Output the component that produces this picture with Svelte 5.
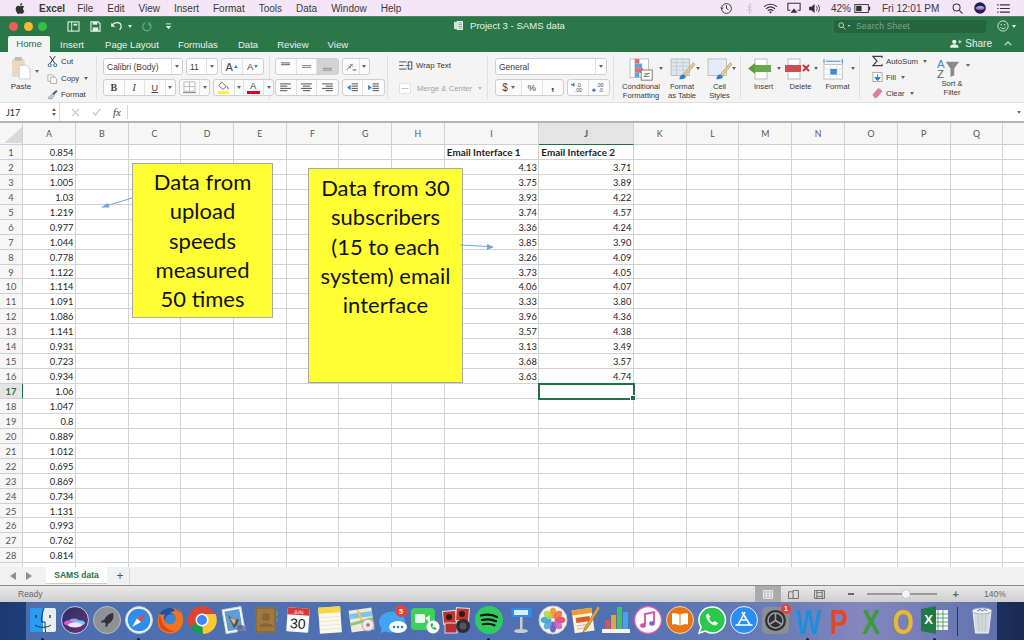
<script>
  const menus = ['File', 'Edit', 'View', 'Insert', 'Format', 'Tools', 'Data', 'Window', 'Help'];
  const tabs = [['Insert', 10], ['Page Layout', 21], ['Formulas', 19], ['Data', 20], ['Review', 19], ['View', 19]];
  const colA = ['0.854','1.023','1.005','1.03','1.219','0.977','1.044','0.778','1.122','1.114','1.091','1.086','1.141','0.931','0.723','0.934','1.06','1.047','0.8','0.889','1.012','0.695','0.869','0.734','1.131','0.993','0.762','0.814'];
  const colI = ['Email Interface 1','4.13','3.75','3.93','3.74','3.36','3.85','3.26','3.73','4.06','3.33','3.96','3.57','3.13','3.68','3.63'];
  const colJ = ['Email Interface 2','3.71','3.89','4.22','4.57','4.24','3.90','4.09','4.05','4.07','3.80','4.36','4.38','3.49','3.57','4.74'];
  const letters = 'ABCDEFGHIJKLMNOPQ'.split('').concat('');
  const rows = Array.from({ length: 29 }, (_, i) => i + 1);

  function cellText(col, row) {
    if (col === 'A') return colA[row - 1] ?? '';
    if (col === 'I') return colI[row - 1] ?? '';
    if (col === 'J') return colJ[row - 1] ?? '';
    return '';
  }
</script>

<div class="screen">
  <!-- mac menu bar -->
  <div class="menubar">
    <svg class="apple" viewBox="0 0 14 16" width="11" height="13"><path d="M10.2 8.4c0-1.7 1.4-2.5 1.5-2.6-.8-1.200-2.100-1.400-2.500-1.400-1.100-.1-2.100.6-2.600.6-.6 0-1.400-.6-2.300-.6C3.100 4.400 2 5.100 1.400 6.200.2 8.300 1.100 11.500 2.300 13.200c.6.8 1.200 1.800 2.100 1.700.8 0 1.200-.5 2.200-.5s1.300.5 2.200.5 1.500-.8 2.100-1.700c.7-1 .9-1.900 1-2-.1 0-1.700-.7-1.700-2.800zM8.500 3.300c.5-.6.800-1.400.7-2.300-.7 0-1.600.5-2.100 1.100-.5.5-.9 1.400-.8 2.200.8.1 1.700-.4 2.200-1z" fill="#333"/></svg>
    <b>Excel</b>
    {#each menus as m}<span>{m}</span>{/each}
    <div class="status-items">
      <svg class="i-tm" viewBox="0 0 14 14" width="13" height="13"><circle cx="7" cy="7" r="5.300" fill="none" stroke="#333"/><path d="M7 3.500V7l2.300 1.400M.5 6l1.500 1.600L3.400 6" fill="none" stroke="#333"/></svg>
      <svg class="i-bt" viewBox="0 0 10 14" width="9" height="13"><path d="M2 4l6 6-3 3V1l3 3-6 6" fill="none" stroke="#c9c3cc"/></svg>
      <svg class="i-wifi" viewBox="0 0 16 12" width="15" height="11"><path d="M1 4c4-3.500 10-3.500 14 0M3 6.300c3-2.500 7-2.500 10 0M5 8.500c1.800-1.500 4.200-1.500 6 0" fill="none" stroke="#333" stroke-width="1.100"/><path d="M8 11.500L6.500 9.800c1-.6 2-.6 3 0z" fill="#333"/></svg>
      <svg class="i-air" viewBox="0 0 16 13" width="14" height="12"><path d="M4 9H1V1h14v8h-3" fill="none" stroke="#333" stroke-width="1.200"/><path d="M8 7l4 5H4z" fill="#333"/></svg>
      <svg class="i-vol" viewBox="0 0 14 12" width="13" height="11"><path d="M0 4h2.500L6 1v10L2.500 8H0z" fill="#333"/><path d="M8 3.500c1 1.500 1 3.500 0 5M10 2c1.700 2.400 1.700 5.600 0 8" fill="none" stroke="#333"/></svg>
      <span class="pct">42%</span>
      <svg class="i-bat" viewBox="0 0 18 10" width="17" height="9"><rect x=".5" y=".5" width="15" height="9" fill="none" stroke="#333"/><rect x="2" y="2" width="6" height="6" fill="#333"/><rect x="16" y="3" width="1.500" height="4" fill="#333"/></svg>
      <span class="clock">Fri 12:01 PM</span>
      <svg class="i-srch" viewBox="0 0 12 12" width="11" height="11"><circle cx="5" cy="5" r="3.800" fill="none" stroke="#333" stroke-width="1.100"/><path d="M8 8l3.500 3.500" stroke="#333" stroke-width="1.200"/></svg>
      <svg class="i-siri" viewBox="0 0 12 12" width="12" height="12"><circle cx="6" cy="6" r="5.800" fill="#20204a"/><ellipse cx="6" cy="6" rx="4.500" ry="1.800" fill="#c46ad8"/><ellipse cx="6.500" cy="5" rx="3" ry="1" fill="#68c8f0"/></svg>
      <svg class="i-list" viewBox="0 0 14 10" width="13" height="9"><path d="M3 1h11M3 5h11M3 9h11" stroke="#333" stroke-width="1.200"/><path d="M0 1h1.500M0 5h1.500M0 9h1.500" stroke="#333" stroke-width="1.200"/></svg>
    </div>
  </div>

  <!-- window title row -->
  <div class="titlebar">
    <div class="lights"><i class="r"></i><i class="y"></i><i class="g"></i></div>
    <div class="qat">
      <svg viewBox="0 0 14 12" width="13" height="11"><rect x="1" y="1" width="12" height="10" fill="none" stroke="#e8f1eb" stroke-width="1.200"/><path d="M5 1v10" stroke="#e8f1eb"/><rect x="7" y="3" width="4" height="2" fill="#e8f1eb"/></svg>
      <svg viewBox="0 0 12 12" width="11" height="11"><path d="M1 1h8l2 2v8H1z" fill="none" stroke="#e8f1eb" stroke-width="1.200"/><rect x="3" y="1" width="5" height="3" fill="#e8f1eb"/><rect x="3" y="7" width="6" height="4" fill="#e8f1eb"/></svg>
      <svg viewBox="0 0 14 12" width="12" height="10"><path d="M1 6c1-3 3-4 6-4 3 0 5 2 5 4.500 0 2-1 3-2 4" fill="none" stroke="#e8f1eb" stroke-width="1.500"/><path d="M0 2v5h5z" fill="#e8f1eb"/></svg>
      <i class="caret lt"></i>
      <svg class="dim" viewBox="0 0 12 12" width="11" height="11"><path d="M8 2.500A4.500 4.500 0 1 1 3.500 2" fill="none" stroke="#6fa384" stroke-width="1.400"/><path d="M7 0v5h3z" fill="#6fa384"/></svg>
      <svg class="cust" viewBox="0 0 8 7" width="7" height="7"><path d="M1 .5h6" stroke="#e8f1eb"/><path d="M1 3h6L4 6.500z" fill="#e8f1eb"/></svg>
    </div>
    <div class="doc">
      <svg viewBox="0 0 10 12" width="9" height="11"><rect x="3" y="1" width="7" height="10" fill="#e8f1eb"/><path d="M5 3h4M5 5h4M5 7h4M5 9h4" stroke="#2b7748" stroke-width=".6"/><rect x="0" y="2" width="5" height="8" fill="#cfe3d6"/></svg>
      Project 3 - SAMS data
    </div>
    <div class="search">
      <svg viewBox="0 0 10 10" width="8" height="8"><circle cx="4" cy="4" r="3" fill="none" stroke="#dfeae3"/><path d="M6.300 6.300l3 3" stroke="#dfeae3"/></svg>
      <i class="caret lt tiny"></i>
      <span>Search Sheet</span>
    </div>
    <svg class="smiley" viewBox="0 0 14 14" width="12" height="12"><circle cx="7" cy="7" r="6" fill="none" stroke="#e8f1eb"/><circle cx="5" cy="5.500" r=".8" fill="#e8f1eb"/><circle cx="9" cy="5.500" r=".8" fill="#e8f1eb"/><path d="M4 8.500c1.500 2 4.500 2 6 0" fill="none" stroke="#e8f1eb"/></svg>
    <i class="caret lt smcaret"></i>
  </div>

  <div class="tabs">
    <div class="tab active">Home</div>
    {#each tabs as t}<div class="tab" style="margin-left:{t[1]}px">{t[0]}</div>{/each}
    <div class="share">
      <svg viewBox="0 0 14 10" width="12" height="9"><circle cx="5" cy="3" r="2.500" fill="#e8f1eb"/><path d="M0 10c0-3 2-4 5-4s5 1 5 4z" fill="#e8f1eb"/><path d="M11.500 1v4M9.500 3h4" stroke="#e8f1eb"/></svg>
      Share
      <svg class="chev" viewBox="0 0 10 6" width="8" height="5"><path d="M1 5l4-4 4 4" fill="none" stroke="#e8f1eb" stroke-width="1.300"/></svg>
    </div>
  </div>

  <!-- ribbon -->
  <div class="ribbon">
    <div class="grp clip">
      <div class="paste">
        <svg viewBox="0 0 22 26" width="20" height="24"><rect x="1" y="3" width="14" height="20" rx="1" fill="#ead9bf"/><rect x="4" y="1" width="8" height="4" rx="1" fill="#bdbdbd"/><path d="M9 10h8l4 4v11H9z" fill="#fff" stroke="#c9c9c9"/></svg>
        <span>Paste</span>
      </div>
      <i class="caret pcaret"></i>
      <div class="cliplist">
        <div><svg viewBox="0 0 12 12" width="11" height="11"><path d="M3 0l5.500 8M9 0L3.500 8" stroke="#222" stroke-width="1"/><circle cx="3" cy="10" r="1.700" fill="none" stroke="#1d5fa8"/><circle cx="9" cy="10" r="1.700" fill="none" stroke="#1d5fa8"/></svg>Cut</div>
        <div><svg viewBox="0 0 12 12" width="11" height="11"><path d="M1 2h5l1 1v6H1z" fill="#fff" stroke="#aaa"/><path d="M4 4.500h4.500l2 2v5H4z" fill="#fff" stroke="#aaa"/></svg>Copy<i class="caret"></i></div>
        <div><svg viewBox="0 0 12 12" width="11" height="11"><path d="M1 10l5-5 2 2-3 4z" fill="#b8cfe6" stroke="#6a7f96" stroke-width=".6"/><path d="M6 5l4-4 1.500 1.500-4 4z" fill="#555"/></svg>Format</div>
      </div>
    </div>

    <div class="grp font">
      <div class="r">
        <div class="box fname"><span>Calibri (Body)</span><em><i class="caret"></i></em></div>
        <div class="box fsize"><span>11</span><em><i class="caret"></i></em></div>
        <div class="btns"><button class="w21 big">A<small class="up"></small></button><button class="w21 mid">A<small class="down"></small></button></div>
      </div>
      <div class="r">
        <div class="btns"><button class="w21 ser"><b>B</b></button><button class="w21 ser"><i>I</i></button><button class="w21 ser under">U</button><button class="w9"><i class="caret"></i></button></div>
        <div class="btns">
          <button class="w21"><svg viewBox="0 0 14 14" width="13" height="13"><path d="M1 1h12v10H1zM7 1v10M1 6h12" fill="none" stroke="#bbb"/><path d="M0 12.500h14" stroke="#888" stroke-width="1.200"/></svg></button>
          <button class="w9"><i class="caret"></i></button>
        </div>
        <div class="btns">
          <button class="w21"><svg viewBox="0 0 14 14" width="13" height="13"><path d="M5 1l5 5-3.500 3L2 5z" fill="#fff" stroke="#666"/><path d="M11 6s1.500 2 1 3" stroke="#2f7fd0"/><rect x="1" y="11" width="12" height="3" fill="#ffee33"/></svg></button>
          <button class="w9"><i class="caret"></i></button>
          <button class="w21 colr">A<span></span></button>
          <button class="w9"><i class="caret"></i></button>
        </div>
      </div>
    </div>

    <div class="grp align">
      <div class="r">
        <div class="btns">
          <button class="w21"><svg viewBox="0 0 12 10" width="11" height="9"><path d="M1 1h10M1 3h10" stroke="#555"/></svg></button>
          <button class="w21"><svg viewBox="0 0 12 10" width="11" height="9"><path d="M1 4h10M1 6h10" stroke="#777"/></svg></button>
          <button class="w21 on"><svg viewBox="0 0 12 10" width="11" height="9"><path d="M1 7h10M1 9h10" stroke="#888"/></svg></button>
        </div>
        <div class="btns"><button class="w17"><svg viewBox="0 0 14 12" width="12" height="11"><path d="M2 10l7-7M4 5l3 3M6 3l3 3" stroke="#555" fill="none"/><path d="M9 10h4" stroke="#2f7fd0" stroke-width="1.400"/></svg></button><button class="w9"><i class="caret"></i></button></div>
      </div>
      <div class="r">
        <div class="btns">
          <button class="w21"><svg viewBox="0 0 12 10" width="11" height="9"><path d="M0 1h12M0 3.500h8M0 6h12M0 8.500h8" stroke="#444"/></svg></button>
          <button class="w21"><svg viewBox="0 0 12 10" width="11" height="9"><path d="M0 1h12M2 3.500h8M0 6h12M2 8.500h8" stroke="#444"/></svg></button>
          <button class="w21"><svg viewBox="0 0 12 10" width="11" height="9"><path d="M0 1h12M4 3.500h8M0 6h12M4 8.500h8" stroke="#444"/></svg></button>
        </div>
        <div class="btns">
          <button class="w21"><svg viewBox="0 0 12 10" width="11" height="9"><path d="M5 1h7M5 3.500h7M5 6h7M5 8.500h7" stroke="#444"/><path d="M0 5l4-3v6z" fill="#2f7fd0"/></svg></button>
          <button class="w21"><svg viewBox="0 0 12 10" width="11" height="9"><path d="M5 1h7M5 3.500h7M5 6h7M5 8.500h7" stroke="#444"/><path d="M4 5L0 2v6z" fill="#2f7fd0"/></svg></button>
        </div>
      </div>
    </div>

    <div class="grp wrap">
      <div class="wl"><svg viewBox="0 0 16 10" width="15" height="9"><path d="M1 1h8M1 5h5M1 9h8" stroke="#444"/><rect x="11" y="1" width="4" height="8" fill="none" stroke="#444"/><path d="M8 5h5" stroke="#2f7fd0"/></svg>Wrap Text</div>
      <div class="wl off"><svg viewBox="0 0 14 12" width="12" height="11"><rect x=".5" y=".5" width="13" height="11" fill="#fff" stroke="#ddd"/><path d="M3 6h8" stroke="#9fbbd6"/></svg>Merge &amp; Center<i class="caret"></i></div>
    </div>

    <div class="grp num">
      <div class="box nfmt"><span>General</span><em><i class="caret"></i></em></div>
      <div class="r">
        <div class="btns">
          <button class="w24 dollar">$<i class="caret"></i></button>
          <button class="w21 mid">%</button>
          <button class="w21 comma">,</button>
        </div>
        <div class="btns">
          <button class="w21 dec"><svg viewBox="0 0 16 12" width="15" height="11"><path d="M1 3h3M4 1v4" stroke="#2f7fd0" stroke-width="1.400"/><text x="7" y="5" class="dt">.0</text><text x="5" y="11" class="dt">.00</text></svg></button>
          <button class="w21 dec"><svg viewBox="0 0 16 12" width="15" height="11"><text x="6" y="5" class="dt">.00</text><text x="8" y="11" class="dt">.0</text><path d="M1 9h4M3 7v4" stroke="#2f7fd0" stroke-width="1.400"/></svg></button>
        </div>
      </div>
    </div>

    <div class="grp styles">
      <div class="big-btn w-cond">
        <svg viewBox="0 0 30 26" width="30" height="24"><rect x="1" y="1" width="20" height="20" fill="#fff" stroke="#bbb"/><rect x="6" y="1" width="5" height="5" fill="#e36b6b"/><rect x="6" y="6" width="8" height="5" fill="#5da5e0"/><rect x="6" y="11" width="9" height="5" fill="#e36b6b"/><rect x="6" y="16" width="5" height="5" fill="#5da5e0"/><rect x="13" y="13" width="12" height="11" fill="#fff" stroke="#777"/><path d="M16 20l6-4M16 17h6M16 20h6" stroke="#444" stroke-width=".7"/></svg>
        <i class="caret"></i><span>Conditional<br>Formatting</span>
      </div>
      <div class="big-btn w-fmt">
        <svg viewBox="0 0 30 26" width="30" height="24"><rect x="1" y="1" width="20" height="18" fill="#dce7f5" stroke="#bbb"/><path d="M1 5h20M1 9h20M1 13h20M7 1v18M14 1v18" stroke="#c2c2c2" stroke-width=".7"/><path d="M14 18L25 5l2 2-10 12z" fill="#e8c98a" stroke="#9a8352" stroke-width=".5"/><path d="M10 23c0-3 2-5 4-5l3 2c0 2-3 3-7 3z" fill="#2f7fd0"/></svg>
        <i class="caret"></i><span>Format<br>as Table</span>
      </div>
      <div class="big-btn w-cell">
        <svg viewBox="0 0 30 26" width="30" height="24"><rect x="1" y="1" width="20" height="18" fill="#e3ecf8" stroke="#bbb"/><path d="M14 18L25 5l2 2-10 12z" fill="#e8c98a" stroke="#9a8352" stroke-width=".5"/><path d="M10 23c0-3 2-5 4-5l3 2c0 2-3 3-7 3z" fill="#2f7fd0"/></svg>
        <i class="caret"></i><span>Cell<br>Styles</span>
      </div>
    </div>

    <div class="grp cells">
      <div class="big-btn w-ins">
        <svg viewBox="0 0 26 22" width="26" height="22"><rect x="7" y="1" width="12" height="20" fill="#fff" stroke="#bbb"/><rect x="5" y="7" width="18" height="7" fill="#6aa84f"/><path d="M0 10.500L7 5v11z" fill="#5f9e3f"/></svg>
        <i class="caret"></i><span>Insert</span>
      </div>
      <div class="big-btn w-del">
        <svg viewBox="0 0 26 22" width="26" height="22"><rect x="3" y="1" width="12" height="20" fill="#fff" stroke="#bbb"/><rect x="0" y="7" width="16" height="7" fill="#c9504f"/><path d="M18 7l6 6M24 7l-6 6" stroke="#c43a3a" stroke-width="2"/></svg>
        <i class="caret"></i><span>Delete</span>
      </div>
      <div class="big-btn w-form">
        <svg viewBox="0 0 26 24" width="26" height="24"><path d="M1 1v5M21 1v5M3 3.500h16" stroke="#2f7fd0"/><rect x="1" y="7" width="20" height="16" fill="#fff" stroke="#bbb"/><path d="M1 12h20M1 18h20M8 7v16M15 7v16" stroke="#ddd"/><rect x="8" y="12" width="7" height="6" fill="#3f88d0"/></svg>
        <i class="caret"></i><span>Format</span>
      </div>
    </div>

    <div class="grp edit">
      <div class="cliplist edlist">
        <div><svg viewBox="0 0 12 12" width="11" height="12"><path d="M11 2.500V1H1l4.500 5L1 11h10V9.500" fill="none" stroke="#444" stroke-width="1.400"/></svg>AutoSum<i class="caret"></i></div>
        <div><svg viewBox="0 0 12 12" width="11" height="12"><rect x="1" y="1" width="10" height="10" fill="#fff" stroke="#aaa"/><path d="M6 3v6M3 6.500L6 10l3-3.500z" fill="#2f7fd0" stroke="#2f7fd0"/></svg>Fill<i class="caret"></i></div>
        <div><svg viewBox="0 0 12 12" width="11" height="12"><path d="M1 8l6-7 4 3-6 7H3z" fill="#e37f97" stroke="#b95c74" stroke-width=".6"/></svg>Clear<i class="caret"></i></div>
      </div>
      <div class="big-btn w-sort">
        <svg viewBox="0 0 26 22" width="25" height="21"><text x="0" y="10" class="az a">A</text><text x="0" y="21" class="az">Z</text><path d="M9 4h14l-5 7v7l-4 2v-9z" fill="#8a8a8a"/></svg>
        <i class="caret"></i><span>Sort &amp;<br>Filter</span>
      </div>
    </div>
  </div>

  <!-- formula bar -->
  <div class="fbar">
    <div class="namebox">J17<span class="stepper"><i></i><i></i></span></div>
    <div class="fxbtns">
      <svg viewBox="0 0 10 10" width="9" height="9"><path d="M1 1l8 8M9 1l-8 8" stroke="#c4c4c4" stroke-width="1.300"/></svg>
      <svg viewBox="0 0 10 10" width="9" height="9"><path d="M1 5l3 3 5-7" fill="none" stroke="#c4c4c4" stroke-width="1.300"/></svg>
      <span class="fx">fx</span>
    </div>
    <div class="finput"></div>
    <i class="caret fdown"></i>
  </div>

  <!-- sheet -->
  <div class="sheet">
    <div class="grid">
      <div class="hd corner"><svg viewBox="0 0 18 16" width="18" height="16"><path d="M18 0v16H0z" fill="#d9d9d9"/></svg></div>
      {#each letters as l}
        <div class="hd col" class:sel={l === 'J'}>{l}</div>
      {/each}
      {#each rows as r}
        <!-- row 29 only peeks out under the tab bar, its number is not visible -->
        <div class="hd rowh" class:sel={r === 17}>{r < 29 ? r : ''}</div>
        {#each letters as l}
          <div class="cell" class:head={r === 1 && (l === 'I' || l === 'J')} class:active={r === 17 && l === 'J'}>{cellText(l, r)}</div>
        {/each}
      {/each}
    </div>

    <div class="note left">Data from upload speeds measured 50 times</div>
    <div class="note right">Data from 30 subscribers (15 to each system) email interface</div>
    <svg class="arrows" viewBox="0 0 1024 444" width="1024" height="444">
      <path d="M132 75L106 83" stroke="#6da5dc" fill="none"/>
      <path d="M101 84.500l7-4.500 1.500 4.500z" fill="#6da5dc"/>
      <path d="M460 122l28 1.500" stroke="#6da5dc" fill="none"/>
      <path d="M494 124l-7-3v6z" fill="#6da5dc"/>
    </svg>
  </div>

  <div class="sheetbar">
    <svg viewBox="0 0 6 8" width="6" height="8"><path d="M6 0v8L0 4z" fill="#8f8f8f"/></svg>
    <svg viewBox="0 0 6 8" width="6" height="8"><path d="M0 0v8l6-4z" fill="#8f8f8f"/></svg>
    <div class="sheettab">SAMS data</div>
    <div class="plus">+</div>
  </div>

  <div class="statusbar">
    <span>Ready</span>
    <div class="views">
      <div class="v on"><svg viewBox="0 0 12 10" width="10" height="9"><path d="M.5.5h11v9H.5zM4 .5v9M8 .5v9M.5 3.500h11M.5 6.500h11" fill="none" stroke="#fff"/></svg></div>
      <div class="v"><svg viewBox="0 0 12 10" width="11" height="9"><path d="M.5 9.500V2h5v7.500M.5 9.500h11V.5h-6V2" fill="none" stroke="#666"/></svg></div>
      <div class="v"><svg viewBox="0 0 12 10" width="11" height="9"><path d="M.5.5h11v9H.5zM3 .5v9M9 .5v9M3 3h6M3 7h6" fill="none" stroke="#666"/></svg></div>
    </div>
    <div class="zoom">
      <i class="minus"></i>
      <div class="track"><i></i></div>
      <span class="zplus">+</span>
      <span class="zpct">140%</span>
    </div>
  </div>

  <!-- dock -->
  <div class="dockwrap">
    <div class="dock">
      <div class="slot on"><svg viewBox="0 0 30 30"><rect x="2" y="3" width="13" height="24" rx="2" fill="#2a9cf0"/><path d="M15 3h11a2 2 0 0 1 2 2v20a2 2 0 0 1-2 2H15z" fill="#e9eef2"/><path d="M16 3c-2 6-3 11-2.500 14H17c0 3 .2 6 .6 10" fill="none" stroke="#234" stroke-width="1"/><path d="M8 10v3M22 10v3" stroke="#234" stroke-width="1.300"/><path d="M7 20c4 3 12 3 16 0" fill="none" stroke="#234"/></svg></div>
      <div class="slot"><svg viewBox="0 0 30 30"><defs><linearGradient id="sg" x1="0" y1="0" x2="1" y2="1"><stop offset="0" stop-color="#283060"/><stop offset="1" stop-color="#6a2f7f"/></linearGradient></defs><circle cx="15" cy="15" r="13.500" fill="url(#sg)" stroke="#c8cde0"/><ellipse cx="10" cy="18" rx="6" ry="3" fill="#d05ed0"/><ellipse cx="19" cy="18" rx="6" ry="2.800" fill="#6fd0ef"/><ellipse cx="15" cy="20" rx="7" ry="2.500" fill="#f0e4f5"/><ellipse cx="14" cy="15" rx="4" ry="1.500" fill="#8fa5e8"/></svg></div>
      <div class="slot"><svg viewBox="0 0 30 30"><circle cx="15" cy="15" r="13.500" fill="#8e9195" stroke="#bbb"/><path d="M21 8c-4 .5-7 3-9 7l-3 1 1 2 2-1 2 2-1 2 2 1 1-3c4-2 6.500-6 5-11z" fill="#2f3236"/></svg></div>
      <div class="slot on"><svg viewBox="0 0 30 30"><circle cx="15" cy="15" r="13.500" fill="#f2f4f6" stroke="#c7ccd2"/><circle cx="15" cy="15" r="11.300" fill="#2f8fe8"/><path d="M22 8l-9 5.500 4 3.500z" fill="#e9483f"/><path d="M8 22l5-8.500 4 3.500z" fill="#fff"/></svg></div>
      <div class="slot"><svg viewBox="0 0 30 30"><circle cx="15" cy="15" r="12" fill="#1f4fa0"/><circle cx="16" cy="15" r="6" fill="#3a86d8"/><path d="M4 9c-2 6-2 12 2 16s13 5 18 0 5-13 2-18c-1-1-2-3-4-4 2 2 3 4 3 5-2-3-5-5-8-5 2 1 3 2 3 3-2 0-4 1-5 2 2 0 4 1 5 3 2 3 0 7-3 8-5 1-8-3-8-6 0-2 .5-3 1-4-2 1-4 1-6 0z" fill="#f0741f"/><path d="M5 10c-2 5-1 11 2 14s9 4 13 2c-7 0-13-5-15-16z" fill="#e5421c"/></svg></div>
      <div class="slot"><svg viewBox="0 0 30 30"><circle cx="15" cy="15" r="14" fill="#db4437"/><path d="M15 15L3 22.500A14 14 0 0 0 16 29z" fill="#0f9d58"/><path d="M15 15l1 14A14 14 0 0 0 28.500 9H15z" fill="#fcc934"/><circle cx="15" cy="15" r="6.500" fill="#fff"/><circle cx="15" cy="15" r="5" fill="#4285f4"/></svg></div>
      <div class="slot"><svg viewBox="0 0 30 30"><g transform="rotate(-10 15 15)"><rect x="5" y="3" width="19" height="24" fill="#fff" stroke="#d5d5d5"/><rect x="7" y="5" width="15" height="20" fill="#5d9ed8"/></g><path d="M9 10l6 5 5-1-2 6-3 3-3-6z" fill="#6a4c30"/><path d="M11 13l6 2-2 5z" fill="#d7b68a"/><circle cx="22" cy="24" r="4" fill="#50658c" opacity=".8"/></svg></div>
      <div class="slot"><svg viewBox="0 0 30 30"><rect x="4" y="2" width="21" height="26" rx="2" fill="#a07842"/><rect x="24" y="6" width="3" height="5" fill="#5d9a5d"/><rect x="24" y="12" width="3" height="5" fill="#4f86b8"/><circle cx="15" cy="12" r="4" fill="#8a6433"/><path d="M8 22c0-5 14-5 14 0z" fill="#8a6433"/><rect x="5" y="3" width="19" height="24" rx="2" fill="none" stroke="#7e5d31"/></svg></div>
      <div class="slot"><svg viewBox="0 0 30 30"><g transform="rotate(4 15 15)"><rect x="4" y="3" width="22" height="24" rx="1" fill="#fbfbfb"/><path d="M4 3h22v7H4z" fill="#d93a33"/><text x="15" y="9" class="cal-m">JUN</text><text x="15" y="23.500" class="cal-d">30</text></g></svg></div>
      <div class="slot"><svg viewBox="0 0 30 30"><g transform="rotate(-4 15 15)"><rect x="4" y="2" width="22" height="26" fill="#faf8e8"/><rect x="4" y="2" width="22" height="6" fill="#f7d64a"/><path d="M4 12h22M4 16h22M4 20h22M4 24h22" stroke="#ddd" stroke-width=".6"/></g></svg></div>
      <div class="slot"><svg viewBox="0 0 30 30"><g transform="rotate(-8 15 15)"><rect x="3" y="4" width="23" height="22" fill="#efe9d8"/><path d="M3 10h23" stroke="#7ec4e8" stroke-width="5"/><path d="M12 4l5 22" stroke="#f2c84b" stroke-width="2"/><path d="M3 18l23-3" stroke="#8fc77f" stroke-width="3"/></g><circle cx="21" cy="20" r="6" fill="#e8e8e8" stroke="#aaa"/><circle cx="21" cy="20" r="1.800" fill="#d65a5a"/></svg></div>
      <div class="slot"><svg viewBox="0 0 30 30"><ellipse cx="14" cy="17" rx="13" ry="10.500" fill="#41a5f5"/><path d="M4 23l-2 5 7-2z" fill="#41a5f5"/><ellipse cx="20" cy="22" rx="9" ry="6" fill="#fff"/><circle cx="16" cy="22" r="1.300" fill="#2f7fd0"/><circle cx="20" cy="22" r="1.300" fill="#2f7fd0"/><circle cx="24" cy="22" r="1.300" fill="#2f7fd0"/><circle cx="23" cy="6" r="6" fill="#e9403a"/><text x="23" y="8.500" class="badge">5</text></svg></div>
      <div class="slot"><svg viewBox="0 0 30 30"><rect x="1" y="3" width="24" height="22" rx="4" fill="#3dd15b"/><rect x="5" y="9" width="10" height="9" rx="1.500" fill="#eafbea"/><path d="M15 13l5-3v8z" fill="#eafbea"/><circle cx="23" cy="22" r="6.500" fill="#fff"/><path d="M20.500 19c0 3 2 5.500 5 6l1-2-2-1-1 1c-.6-.5-1-1.200-1.200-2l1-.7-.8-2.200z" fill="#2fb24a"/></svg></div>
      <div class="slot"><svg viewBox="0 0 30 30"><rect x="1" y="6" width="13" height="13" fill="#c5332e" stroke="#ddd" transform="rotate(-5 7 12)"/><rect x="14" y="3" width="13" height="13" fill="#c5332e" stroke="#ddd" transform="rotate(4 20 9)"/><rect x="3" y="18" width="12" height="10" fill="#b53030" stroke="#ddd"/><circle cx="7" cy="12" r="3" fill="#2a1a1a"/><circle cx="20" cy="9" r="3" fill="#2a1a1a"/><circle cx="21" cy="21" r="7" fill="#2c2f33"/><circle cx="21" cy="21" r="3.500" fill="#556"/></svg></div>
      <div class="slot on"><svg viewBox="0 0 30 30"><circle cx="15" cy="15" r="14" fill="#2ecc60"/><path d="M7 10.500c6-1.500 11-1 16 1.500M8 15c5-1.200 10-.8 14 1.200M9 19.300c4-1 8-.6 11.500 1" fill="none" stroke="#111" stroke-width="2.200" stroke-linecap="round"/></svg></div>
      <div class="slot"><svg viewBox="0 0 30 30"><path d="M5 3h21l-1 9H6z" fill="#2f8fe8"/><rect x="8" y="5" width="14" height="5" fill="#dfeefc"/><rect x="14" y="12" width="2.500" height="12" fill="#c7ccd2"/><ellipse cx="15" cy="26" rx="7" ry="2" fill="#c7ccd2"/></svg></div>
      <div class="slot"><svg viewBox="0 0 30 30"><circle cx="15" cy="15" r="14" fill="#f4f4f4" stroke="#ccc"/><ellipse cx="15" cy="8" rx="3.500" ry="5.500" fill="#f3a23a"/><ellipse cx="15" cy="22" rx="3.500" ry="5.500" fill="#7a5fc8"/><ellipse cx="8" cy="15" rx="5.500" ry="3.500" fill="#3fb2dc"/><ellipse cx="22" cy="15" rx="5.500" ry="3.500" fill="#e5547a"/><ellipse cx="10" cy="10" rx="3.500" ry="5" fill="#b8cf3f" transform="rotate(-45 10 10)" opacity=".85"/><ellipse cx="20" cy="10" rx="3.500" ry="5" fill="#ef6a3a" transform="rotate(45 20 10)" opacity=".85"/><ellipse cx="10" cy="20" rx="3.500" ry="5" fill="#4f9ed8" transform="rotate(45 10 20)" opacity=".85"/><ellipse cx="20" cy="20" rx="3.500" ry="5" fill="#c35fb5" transform="rotate(-45 20 20)" opacity=".85"/></svg></div>
      <div class="slot"><svg viewBox="0 0 30 30"><g transform="rotate(-8 13 15)"><rect x="3" y="4" width="20" height="23" fill="#f9f2dc"/><rect x="3" y="4" width="20" height="5" fill="#ee9a2f"/><rect x="6" y="12" width="14" height="5" fill="#d95d2a"/><path d="M6 20h14M6 23h10" stroke="#bbb"/></g><path d="M28 1L15 22l-2 5 4-3L30 3z" fill="#e8a33a" stroke="#8a5e1f" stroke-width=".5"/></svg></div>
      <div class="slot"><svg viewBox="0 0 30 30"><rect x="1" y="24" width="28" height="4" fill="#f5f5f5"/><rect x="4" y="15" width="5" height="9" fill="#e34f4f"/><rect x="10" y="10" width="5" height="14" fill="#f0a030"/><rect x="16" y="2" width="5" height="22" fill="#3fc16a"/><rect x="22" y="7" width="5" height="17" fill="#4aa3e8"/></svg></div>
      <div class="slot"><svg viewBox="0 0 30 30"><circle cx="15" cy="15" r="13.500" fill="#fdfdfd" stroke="#e05cb0" stroke-width="1.500"/><path d="M12 20V9l9-2v11" fill="none" stroke="#d54ea8" stroke-width="1.800"/><ellipse cx="10" cy="20.500" rx="2.800" ry="2.200" fill="#d54ea8"/><ellipse cx="19" cy="18.500" rx="2.800" ry="2.200" fill="#7b5fd8"/></svg></div>
      <div class="slot"><svg viewBox="0 0 30 30"><circle cx="15" cy="15" r="13.500" fill="#e87511" stroke="#f8d9b8"/><path d="M15 10c-2-1.500-5-2-8-1.500v11c3-.5 6 0 8 1.500 2-1.500 5-2 8-1.500v-11c-3-.5-6 0-8 1.500z" fill="#fff"/><path d="M15 10v11" stroke="#e87511"/></svg></div>
      <div class="slot"><svg viewBox="0 0 30 30"><path d="M15 2a13 13 0 0 0-11 20L2 28l6.500-2A13 13 0 1 0 15 2z" fill="#2cc84d" stroke="#fff" stroke-width="1.500"/><path d="M11 8.500L9 10c-.5 4 5 10.500 10 10.500l2-2.500-3.500-2-1.500 1.500c-2-.8-3.500-2.500-4-4.500l1.500-1z" fill="#fff"/></svg></div>
      <div class="slot"><svg viewBox="0 0 30 30"><circle cx="15" cy="15" r="13.500" fill="#2a8df0" stroke="#e8f1fa"/><path d="M16 7L9 20M13 7l8 13M6.500 20h17M11 15h8" stroke="#fff" stroke-width="1.500" fill="none"/></svg></div>
      <div class="slot"><svg viewBox="0 0 30 30"><rect x="1" y="2" width="27" height="27" rx="5" fill="#8b8e92"/><circle cx="14.500" cy="15.500" r="10.500" fill="#2d2f32"/><circle cx="14.500" cy="15.500" r="7.500" fill="none" stroke="#9ea1a5" stroke-width="1.500"/><path d="M14.500 15.500V8M14.500 15.500l6.500 4M14.500 15.500l-6.500 4" stroke="#9ea1a5" stroke-width="1.500"/><circle cx="25" cy="4" r="5" fill="#e9403a"/><text x="25" y="6.300" class="badge">1</text></svg></div>
      <div class="slot on"><svg viewBox="0 0 30 30"><text transform="translate(15 29) scale(1 1.300)" class="mso" fill="#1f8fdc">W</text></svg></div>
      <div class="slot"><svg viewBox="0 0 30 30"><text transform="translate(15 29) scale(1 1.300)" class="mso" fill="#e0492a">P</text></svg></div>
      <div class="slot"><svg viewBox="0 0 30 30"><text transform="translate(15 29) scale(1 1.300)" class="mso" fill="#3c9a3c">X</text></svg></div>
      <div class="slot"><svg viewBox="0 0 30 30"><text transform="translate(15 29) scale(1 1.300)" class="mso" fill="#e8b92f">O</text></svg></div>
      <div class="slot on"><svg viewBox="0 0 30 30"><rect x="12" y="5" width="16" height="20" fill="#f4f8f5"/><path d="M12 9h16M12 13h16M12 17h16M12 21h16M18 5v20M23 5v20" stroke="#2f8a52" stroke-width=".7"/><path d="M1 4l15-3v28L1 26z" fill="#1f7a46"/><text x="8.500" y="19" class="xl">X</text></svg></div>
      <div class="sep"></div>
      <div class="slot trash"><svg viewBox="0 0 30 30"><path d="M6 6l2.500 22h13L24 6z" fill="#d7dadd" stroke="#f2f2f2"/><ellipse cx="15" cy="6" rx="10" ry="3" fill="#eef0f1" stroke="#aab"/><path d="M10 6l3-1.500 2 1.500 3-1.500 2 1.500" stroke="#5d7f9c" fill="none"/><path d="M11 10l1 16M15 10v16M19 10l-1 16" stroke="#c1c4c7"/></svg></div>
    </div>
  </div>
</div>

<style>
  :global(body) {
    margin: 0;
    overflow: hidden;
  }

  .screen {
    width: 1024px;
    height: 640px;
    display: flex;
    flex-direction: column;
    overflow: hidden;
    font-family: "Liberation Sans", sans-serif;
    color: #333;
  }

  /* menu bar */
  .menubar {
    height: 16px;
    flex: none;
    background: #f4e6f6;
    display: flex;
    align-items: center;
    gap: 14px;
    padding-left: 15px;
    font-size: 10px;
    color: #3a3a3a;
  }
  .menubar b {
    margin: 0 -2px 0 -1px;
    font-weight: 700;
  }
  .status-items {
    margin-left: auto;
    width: 304px;
    display: flex;
    align-items: center;
    gap: 0;
    font-size: 10px;
  }
  .status-items svg, .status-items span { flex: none; }
  .i-bt { margin-left: 12px; }
  .i-wifi { margin-left: 9px; }
  .i-air { margin-left: 9px; }
  .i-vol { margin-left: 8px; }
  .pct { margin-left: 9px; }
  .i-bat { margin-left: 3px; }
  .clock { margin-left: 11px; }
  .i-srch { margin-left: 13px; }
  .i-siri { margin-left: 11px; }
  .i-list { margin-left: 11px; }

  /* title */
  .titlebar {
    height: 20px;
    flex: none;
    background: #2b7748;
    display: flex;
    align-items: center;
    position: relative;
    color: #e8f1eb;
    font-size: 10px;
    box-shadow: inset 0 1px 0 #4b8a62;
  }
  .lights {
    display: flex;
    gap: 5.500px;
    margin-left: 9px;
  }
  .lights i {
    width: 9px;
    height: 9px;
    border-radius: 50%;
  }
  .lights .r { background: #ee5f58; }
  .lights .y { background: #f6b92f; }
  .lights .g { background: #35c04a; }
  .qat {
    display: flex;
    align-items: center;
    gap: 10px;
    margin-left: 20px;
  }
  .qat .caret { margin-left: -5px; }
  .qat .cust { margin-left: 2px; }
  .doc {
    position: absolute;
    left: 454px;
    top: 4px;
    display: flex;
    align-items: center;
    gap: 7px;
    font-size: 9.600px;
  }
  .search {
    margin-left: auto;
    width: 152px;
    height: 13px;
    background: #246540;
    border-radius: 2px;
    display: flex;
    align-items: center;
    gap: 2px;
    padding-left: 4px;
    box-sizing: border-box;
    color: #7ea78e;
    font-size: 8.500px;
  }
  .search span { margin-left: 4px; letter-spacing: .2px; }
  .smiley { margin-left: 11px; }
  .smcaret { margin: 0 8px 0 3px; }

  .caret {
    display: inline-block;
    width: 0;
    height: 0;
    border-left: 2px solid transparent;
    border-right: 2px solid transparent;
    border-top: 3px solid #666;
    flex: none;
  }
  .caret.lt { border-top-color: #e8f1eb; }
  .caret.tiny { border-left-width: 1.500px; border-right-width: 1.500px; border-top-width: 2px; }

  /* tabs */
  .tabs {
    height: 16px;
    flex: none;
    background: #2b7748;
    display: flex;
    align-items: flex-end;
    padding-left: 8px;
    font-size: 9.600px;
    color: #e8f1eb;
  }
  .tab {
    height: 15px;
    line-height: 15px;
  }
  .tab.active {
    width: 42px;
    height: 16px;
    line-height: 16px;
    text-align: center;
    background: #f4f4f4;
    color: #217346;
    border-radius: 2px 2px 0 0;
  }
  .share {
    margin-left: auto;
    height: 16px;
    display: flex;
    align-items: center;
    gap: 3px;
    padding: 0 12px 2px 0;
    box-sizing: border-box;
    font-size: 10px;
  }
  .chev { margin-left: 9px; }

  /* ribbon */
  .ribbon {
    height: 51px;
    flex: none;
    background: #f4f4f4;
    border-bottom: 1px solid #dedede;
    box-sizing: border-box;
    display: flex;
    font-size: 7.600px;
    color: #3a3a3a;
  }
  .grp {
    flex: none;
    box-sizing: border-box;
    border-right: 1px solid #e0e0e0;
    margin: 3px 0 3px;
    display: flex;
    flex-direction: column;
    gap: 4px;
    padding: 3px 0 0 6px;
  }
  .r {
    display: flex;
    gap: 3px;
  }
  .clip {
    width: 97px;
    flex-direction: row;
    gap: 0;
    padding-left: 9px;
    padding-top: 1px;
    position: relative;
  }
  .paste {
    width: 26px;
    display: flex;
    flex-direction: column;
    align-items: center;
    gap: 2px;
    margin-left: -1px;
    font-size: 8px;
  }
  .pcaret { margin: 14px 0 0 1px; }
  .cliplist {
    margin-left: 8px;
    display: flex;
    flex-direction: column;
    justify-content: space-between;
    height: 44px;
    font-size: 7.800px;
  }
  .cliplist div {
    display: flex;
    align-items: center;
    gap: 3px;
  }
  .cliplist .caret { margin-left: 2px; }

  .font { width: 173px; }
  .align { width: 118px; padding-left: 5px; }
  .wrap { width: 100px; padding: 6px 0 0 10px; gap: 13px; font-size: 7.800px; }
  .num { width: 126px; padding-left: 7px; }
  .styles { width: 127px; flex-direction: row; gap: 0; padding: 3px 0 0 5px; }
  .cells { width: 119px; flex-direction: row; gap: 2px; padding: 3px 0 0 5px; }
  .edit { flex: 1; border: 0; flex-direction: row; padding: 0 0 0 2px; }

  .box {
    height: 17px;
    box-sizing: border-box;
    background: #fff;
    border: 1px solid #cfcfcf;
    border-radius: 3px;
    display: flex;
    align-items: center;
    font-size: 8.500px;
    padding-left: 3px;
  }
  .box span { flex: 1; }
  .box em {
    width: 10px;
    height: 100%;
    border-left: 1px solid #ddd;
    display: flex;
    align-items: center;
    justify-content: center;
  }
  .fname { width: 80px; }
  .fsize { width: 32px; }
  .nfmt { width: 112px; margin-bottom: 0; }

  .btns {
    display: flex;
    height: 17px;
    background: #fbfbfb;
    border: 1px solid #cfcfcf;
    border-radius: 3px;
    box-sizing: border-box;
  }
  button {
    all: unset;
    height: 100%;
    box-sizing: border-box;
    border-right: 1px solid #e2e2e2;
    display: flex;
    align-items: center;
    justify-content: center;
    font-family: "Liberation Sans", sans-serif;
    color: #444;
    font-size: 9px;
  }
  button:last-child { border-right: 0; }
  .w21 { width: 20.500px; }
  .w17 { width: 17px; }
  .w24 { width: 26px; gap: 3px; }
  .w9 { width: 9px; }
  button.on { background: #d3d3d3; }
  .big { font-size: 11px; }
  .mid { font-size: 9.500px; }
  .up, .down {
    width: 0;
    height: 0;
    border-left: 2.500px solid transparent;
    border-right: 2.500px solid transparent;
    margin-left: 1px;
  }
  .up { border-bottom: 3px solid #3d8ad6; }
  .down { border-top: 3px solid #3d8ad6; }
  .ser { font-family: "Liberation Serif", serif; font-size: 10px; }
  .under { text-decoration: underline; font-family: "Liberation Sans", sans-serif; font-size: 9px; }
  .colr {
    flex-direction: column;
    line-height: 8px;
    font-size: 9.500px;
  }
  .colr span {
    width: 13px;
    height: 3px;
    background: #e60012;
    margin-top: 1px;
  }
  .dollar { font-size: 10px; }
  .comma { font-weight: 700; font-size: 12px; padding-bottom: 4px; }
  .dt { font-size: 5.500px; fill: #444; font-family: "Liberation Sans", sans-serif; }

  .wl {
    display: flex;
    align-items: center;
    gap: 3px;
    color: #333;
  }
  .wl.off { color: #a3a3a3; gap: 6px; padding-left: 1px; }
  .wl .caret { border-top-color: #bbb; margin-left: 0; }

  .big-btn {
    position: relative;
    display: flex;
    flex-direction: column;
    align-items: center;
    font-size: 7.600px;
    line-height: 8.600px;
    text-align: center;
  }
  .big-btn > svg { height: 24px; flex: none; margin-bottom: 1px; }
  .big-btn .caret { position: absolute; top: 9px; right: 0; }
  .w-cond { width: 44px; }
  .w-cond .caret { right: 0; }
  .w-cond > svg { margin-left: 4px; }
  .w-fmt { width: 36px; margin-left: 1px; }
  .w-cell { width: 33px; margin-left: 3px; }
  .w-cell > svg { margin-left: 3px; }
  .w-fmt > svg { margin-left: 3px; }
  .w-ins { width: 35px; }
  .w-del { width: 35px; }
  .w-form { width: 35px; }
  .w-ins > svg, .w-del > svg, .w-form > svg { height: 22px; margin-right: 6px; margin-bottom: 3px; }
  .edlist { margin-left: 10px; width: 58px; }
  .w-sort { width: 36px; margin-left: 0; }
  .w-sort > svg { margin: 3px 6px 1px 0; height: 21px; }
  .az { font-size: 12px; fill: #666; font-family: "Liberation Sans", sans-serif; }
  .az.a { fill: #3d8ad6; }

  /* formula bar */
  .fbar {
    height: 20px;
    flex: none;
    background: #fff;
    border-bottom: 2px solid #b4b4b4;
    box-sizing: border-box;
    display: flex;
    align-items: center;
    font-size: 8.500px;
    position: relative;
  }
  .namebox {
    width: 60px;
    height: 100%;
    box-sizing: border-box;
    padding-left: 6px;
    display: flex;
    align-items: center;
    justify-content: space-between;
    font-family: "Lato", sans-serif;
    font-size: 9px;
    border-right: 1px solid #d8d8d8;
    color: #222;
  }
  .stepper {
    margin-right: 3px;
    display: flex;
    flex-direction: column;
    gap: 2px;
  }
  .stepper i {
    border-left: 2.500px solid transparent;
    border-right: 2.500px solid transparent;
    border-bottom: 3px solid #666;
  }
  .stepper i:last-child {
    border-bottom: 0;
    border-top: 3px solid #666;
  }
  .fxbtns {
    display: flex;
    align-items: center;
    gap: 12px;
    padding-left: 11px;
    width: 68px;
    height: 14px;
    box-sizing: border-box;
    border-right: 1px solid #d8d8d8;
  }
  .fx {
    font-family: "Liberation Serif", serif;
    font-style: italic;
    font-size: 11px;
    color: #444;
  }
  .finput { flex: 1; }
  .fdown { margin-right: 3px; border-left-width: 2.500px; border-right-width: 2.500px; border-top-color: #777; }

  /* grid */
  .sheet {
    height: 444px;
    flex: none;
    position: relative;
    overflow: hidden;
    background: #fff;
  }
  .grid {
    display: grid;
    grid-template-columns: 23px 53px repeat(7, 52.700px) 94.500px 94.500px repeat(8, 52.800px);
    grid-template-rows: 22px;
    grid-auto-rows: 14.950px;
    font-family: "Lato", sans-serif;
    font-size: 9.300px;
    color: #1c1c1c;
  }
  .cell {
    border-right: 1px solid #d2d2d2;
    border-bottom: 1px solid #d2d2d2;
    box-sizing: border-box;
    text-align: right;
    padding-right: 1.500px;
    line-height: 15px;
    white-space: nowrap;
    overflow: hidden;
    position: relative;
  }
  .cell.head {
    text-align: left;
    font-weight: 700;
    font-size: 9.900px;
    padding: 0 0 0 2px;
  }
  .cell.active {
    outline: 2px solid #1e7145;
    outline-offset: -1px;
    overflow: visible;
    z-index: 1;
  }
  .cell.active::after {
    content: "";
    position: absolute;
    right: -3px;
    bottom: -3px;
    width: 4px;
    height: 4px;
    background: #1e7145;
    border: 1px solid #fff;
  }
  .hd {
    background: #f6f6f6;
    border-right: 1px solid #d2d2d2;
    border-bottom: 1px solid #cfcfcf;
    box-sizing: border-box;
    color: #555;
    font-size: 8.800px;
    text-align: center;
  }
  .hd.col {
    line-height: 22px;
  }
  .hd.rowh {
    line-height: 15px;
    font-size: 9.300px;
  }
  .hd.corner {
    display: flex;
    align-items: flex-end;
    justify-content: flex-end;
    padding: 0 0 1px 0;
  }
  .hd.sel {
    background: #e4e4e4;
    color: #1e7145;
    font-weight: 700;
  }
  .hd.col.sel { border-bottom: 1.500px solid #1e7145; }
  .hd.rowh.sel { border-right: 1.500px solid #1e7145; color: #1e7145; }

  .arrows {
    position: absolute;
    left: 0;
    top: 0;
    pointer-events: none;
  }
  .note {
    position: absolute;
    box-sizing: border-box;
    background: #ffff33;
    border: 1px solid #a8a8a8;
    color: #111;
    font-family: "Lato", sans-serif;
    font-size: 22px;
    line-height: 29.300px;
    text-align: center;
  }
  .note.left {
    left: 132px;
    top: 40px;
    width: 141px;
    height: 155px;
    padding: 3px 18px 0;
  }
  .note.right {
    left: 308px;
    top: 45px;
    width: 155px;
    height: 215px;
    padding: 4px 8px 0;
  }

  /* sheet tabs */
  .sheetbar {
    height: 19px;
    flex: none;
    background: #f1f1f1;
    border-bottom: 1px solid #8c8c8c;
    box-sizing: border-box;
    display: flex;
    align-items: center;
    padding-left: 10px;
    gap: 10px;
  }
  .sheettab {
    margin-left: 4px;
    width: 61px;
    height: 17px;
    margin-top: -1px;
    background: #fff;
    border-bottom: 1px solid #ccc;
    box-sizing: border-box;
    text-align: center;
    line-height: 16px;
    color: #217346;
    font-size: 8.500px;
    font-weight: 700;
  }
  .plus {
    width: 18px;
    margin-left: -6px;
    height: 17px;
    line-height: 16px;
    text-align: center;
    font-size: 12px;
    color: #555;
    border-right: 1px solid #d8d8d8;
  }

  .statusbar {
    height: 16px;
    flex: none;
    background: linear-gradient(#e9e9e9, #cfcfcf);
    display: flex;
    align-items: center;
    font-size: 8.500px;
    color: #666;
    padding-left: 18px;
    box-sizing: border-box;
  }
  .views {
    margin-left: 712px;
    display: flex;
    height: 100%;
  }
  .v {
    width: 26px;
    display: flex;
    align-items: center;
    justify-content: center;
  }
  .v.on { background: #ababab; }
  .zoom {
    display: flex;
    align-items: center;
    flex: 1;
  }
  .minus {
    width: 6px;
    height: 1.500px;
    background: #666;
    margin-left: 15px;
  }
  .track {
    width: 70px;
    height: 2px;
    background: #999;
    margin-left: 13px;
    position: relative;
  }
  .track i {
    position: absolute;
    left: 35px;
    top: -3px;
    width: 8px;
    height: 8px;
    border-radius: 50%;
    background: #f4f4f4;
    box-shadow: 0 0 1px #777;
  }
  .zplus {
    margin-left: 16px;
    font-size: 11px;
    font-weight: 700;
  }
  .zpct {
    margin-left: 25px;
    font-size: 8.500px;
  }

  /* dock */
  .dockwrap {
    height: 39px;
    flex: none;
    overflow: hidden;
    background: linear-gradient(90deg, #1c3a70 0, #1f3f78 26px, #1c2f5c 997px, #182a52 100%);
  }
  .dock {
    margin-left: 26px;
    width: 971px;
    height: 100%;
    box-sizing: border-box;
    background: linear-gradient(90deg, #4d6eae 0, #4f70b2 60%, #6f7fb8 80%, #8587bd 86%, #5f72ae 100%);
    display: flex;
    padding: 3px 0 0 1px;
  }
  .slot {
    width: 31.860px;
    flex: none;
    position: relative;
    display: flex;
    justify-content: center;
  }
  .slot svg {
    width: 30px;
    height: 30px;
    flex: none;
    overflow: visible;
  }
  .slot.on::after {
    content: "";
    position: absolute;
    left: 50%;
    margin-left: -1.500px;
    top: 33px;
    width: 3px;
    height: 3px;
    border-radius: 50%;
    background: #10223f;
  }
  .sep {
    width: 1px;
    height: 29px;
    background: #22365f;
    margin: 2px 8px 0 6px;
    flex: none;
  }
  .cal-m {
    font-size: 5px;
    fill: #fff;
    text-anchor: middle;
    font-family: "Liberation Sans", sans-serif;
  }
  .cal-d {
    font-size: 14px;
    fill: #222;
    text-anchor: middle;
    font-family: "Liberation Sans", sans-serif;
  }
  .badge {
    font-size: 7px;
    fill: #fff;
    text-anchor: middle;
    font-family: "Liberation Sans", sans-serif;
    font-weight: 700;
  }
  .mso {
    font-size: 27px;
    font-weight: 700;
    text-anchor: middle;
    font-family: "Liberation Sans", sans-serif;
  }
  .xl {
    font-size: 13px;
    font-weight: 700;
    fill: #fff;
    text-anchor: middle;
    font-family: "Liberation Sans", sans-serif;
  }
</style>
